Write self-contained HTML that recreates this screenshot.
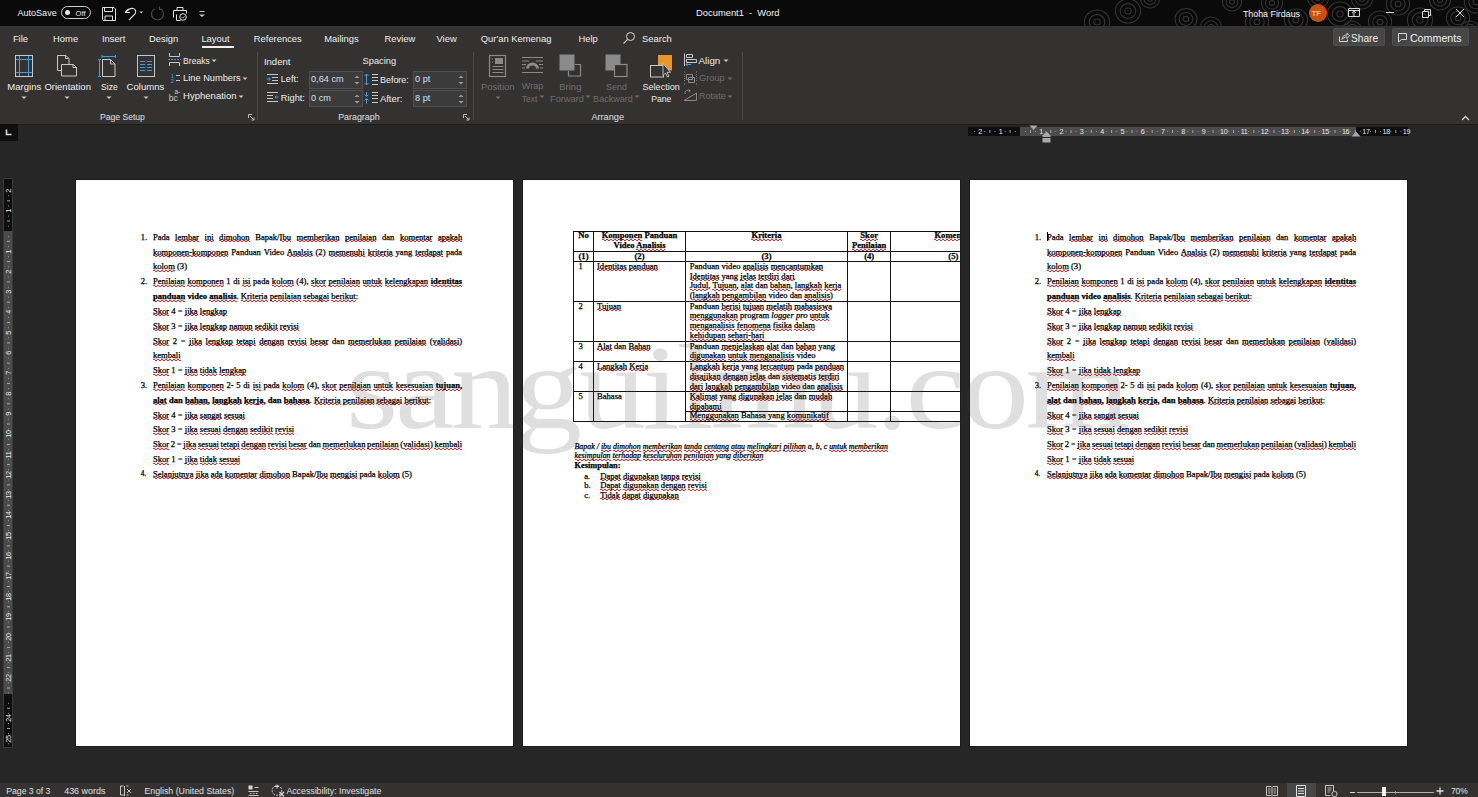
<!DOCTYPE html>
<html><head><meta charset="utf-8"><style>
html,body{margin:0;padding:0;width:1478px;height:797px;overflow:hidden;background:#262626;}
.r{position:absolute;}
.t{position:absolute;white-space:pre;}
.u{padding-bottom:0.5px;background-image:linear-gradient(90deg,#e42a2a 50%,transparent 50%),linear-gradient(90deg,transparent 50%,#e42a2a 50%);background-size:4px 1px,4px 1px;background-position:0 calc(100% - 1px),0 100%;background-repeat:repeat-x;}
b{font-weight:700;}
.pg{-webkit-text-stroke:0.25px #000;}
.eq{-webkit-text-stroke:0;}
</style></head><body>
<div class="r" style="left:0px;top:0px;width:1478px;height:26px;background:#0a0a0a"></div><svg class="r" style="left:1050px;top:0px;" width="428" height="26" viewBox="0 0 428 26"><ellipse cx="47" cy="22" rx="3.2" ry="3.0" fill="none" stroke="#333" stroke-width="1.1"/><ellipse cx="47" cy="22" rx="7.8" ry="7.4" fill="none" stroke="#333" stroke-width="1.1"/><ellipse cx="47" cy="22" rx="12.6" ry="12.0" fill="none" stroke="#333" stroke-width="1.1"/><ellipse cx="78" cy="11" rx="3.2" ry="3.0" fill="none" stroke="#333" stroke-width="1.1"/><ellipse cx="78" cy="11" rx="7.8" ry="7.4" fill="none" stroke="#333" stroke-width="1.1"/><ellipse cx="78" cy="11" rx="12.6" ry="12.0" fill="none" stroke="#333" stroke-width="1.1"/><ellipse cx="100" cy="-1" rx="2.4" ry="2.2" fill="none" stroke="#333" stroke-width="1.1"/><ellipse cx="100" cy="-1" rx="5.9" ry="5.6" fill="none" stroke="#333" stroke-width="1.1"/><ellipse cx="100" cy="-1" rx="9.5" ry="9.0" fill="none" stroke="#333" stroke-width="1.1"/><ellipse cx="136" cy="19" rx="2.8" ry="2.6" fill="none" stroke="#333" stroke-width="1.1"/><ellipse cx="136" cy="19" rx="6.8" ry="6.5" fill="none" stroke="#333" stroke-width="1.1"/><ellipse cx="136" cy="19" rx="11.0" ry="10.5" fill="none" stroke="#333" stroke-width="1.1"/><ellipse cx="161" cy="27" rx="2.6" ry="2.5" fill="none" stroke="#333" stroke-width="1.1"/><ellipse cx="161" cy="27" rx="6.5" ry="6.2" fill="none" stroke="#333" stroke-width="1.1"/><ellipse cx="161" cy="27" rx="10.5" ry="10.0" fill="none" stroke="#333" stroke-width="1.1"/><ellipse cx="207" cy="22" rx="2.9" ry="2.8" fill="none" stroke="#333" stroke-width="1.1"/><ellipse cx="207" cy="22" rx="7.2" ry="6.8" fill="none" stroke="#333" stroke-width="1.1"/><ellipse cx="207" cy="22" rx="11.6" ry="11.0" fill="none" stroke="#333" stroke-width="1.1"/><ellipse cx="222" cy="3" rx="2.6" ry="2.5" fill="none" stroke="#333" stroke-width="1.1"/><ellipse cx="222" cy="3" rx="6.5" ry="6.2" fill="none" stroke="#333" stroke-width="1.1"/><ellipse cx="222" cy="3" rx="10.5" ry="10.0" fill="none" stroke="#333" stroke-width="1.1"/><ellipse cx="246" cy="20" rx="2.9" ry="2.8" fill="none" stroke="#333" stroke-width="1.1"/><ellipse cx="246" cy="20" rx="7.2" ry="6.8" fill="none" stroke="#333" stroke-width="1.1"/><ellipse cx="246" cy="20" rx="11.6" ry="11.0" fill="none" stroke="#333" stroke-width="1.1"/><ellipse cx="268" cy="-2" rx="2.6" ry="2.5" fill="none" stroke="#333" stroke-width="1.1"/><ellipse cx="268" cy="-2" rx="6.5" ry="6.2" fill="none" stroke="#333" stroke-width="1.1"/><ellipse cx="268" cy="-2" rx="10.5" ry="10.0" fill="none" stroke="#333" stroke-width="1.1"/><ellipse cx="290" cy="14" rx="3.2" ry="3.0" fill="none" stroke="#333" stroke-width="1.1"/><ellipse cx="290" cy="14" rx="7.8" ry="7.4" fill="none" stroke="#333" stroke-width="1.1"/><ellipse cx="290" cy="14" rx="12.6" ry="12.0" fill="none" stroke="#333" stroke-width="1.1"/><ellipse cx="312" cy="-1" rx="2.6" ry="2.5" fill="none" stroke="#333" stroke-width="1.1"/><ellipse cx="312" cy="-1" rx="6.5" ry="6.2" fill="none" stroke="#333" stroke-width="1.1"/><ellipse cx="312" cy="-1" rx="10.5" ry="10.0" fill="none" stroke="#333" stroke-width="1.1"/><ellipse cx="330" cy="22" rx="2.9" ry="2.8" fill="none" stroke="#333" stroke-width="1.1"/><ellipse cx="330" cy="22" rx="7.2" ry="6.8" fill="none" stroke="#333" stroke-width="1.1"/><ellipse cx="330" cy="22" rx="11.6" ry="11.0" fill="none" stroke="#333" stroke-width="1.1"/><ellipse cx="348" cy="4" rx="2.9" ry="2.8" fill="none" stroke="#333" stroke-width="1.1"/><ellipse cx="348" cy="4" rx="7.2" ry="6.8" fill="none" stroke="#333" stroke-width="1.1"/><ellipse cx="348" cy="4" rx="11.6" ry="11.0" fill="none" stroke="#333" stroke-width="1.1"/><ellipse cx="370" cy="20" rx="3.2" ry="3.0" fill="none" stroke="#333" stroke-width="1.1"/><ellipse cx="370" cy="20" rx="7.8" ry="7.4" fill="none" stroke="#333" stroke-width="1.1"/><ellipse cx="370" cy="20" rx="12.6" ry="12.0" fill="none" stroke="#333" stroke-width="1.1"/><ellipse cx="390" cy="0" rx="2.6" ry="2.5" fill="none" stroke="#333" stroke-width="1.1"/><ellipse cx="390" cy="0" rx="6.5" ry="6.2" fill="none" stroke="#333" stroke-width="1.1"/><ellipse cx="390" cy="0" rx="10.5" ry="10.0" fill="none" stroke="#333" stroke-width="1.1"/><ellipse cx="408" cy="18" rx="2.9" ry="2.8" fill="none" stroke="#333" stroke-width="1.1"/><ellipse cx="408" cy="18" rx="7.2" ry="6.8" fill="none" stroke="#333" stroke-width="1.1"/><ellipse cx="408" cy="18" rx="11.6" ry="11.0" fill="none" stroke="#333" stroke-width="1.1"/><ellipse cx="426" cy="2" rx="2.9" ry="2.8" fill="none" stroke="#333" stroke-width="1.1"/><ellipse cx="426" cy="2" rx="7.2" ry="6.8" fill="none" stroke="#333" stroke-width="1.1"/><ellipse cx="426" cy="2" rx="11.6" ry="11.0" fill="none" stroke="#333" stroke-width="1.1"/><ellipse cx="182" cy="2" rx="2.4" ry="2.2" fill="none" stroke="#333" stroke-width="1.1"/><ellipse cx="182" cy="2" rx="5.9" ry="5.6" fill="none" stroke="#333" stroke-width="1.1"/><ellipse cx="182" cy="2" rx="9.5" ry="9.0" fill="none" stroke="#333" stroke-width="1.1"/><ellipse cx="302" cy="30" rx="2.4" ry="2.2" fill="none" stroke="#333" stroke-width="1.1"/><ellipse cx="302" cy="30" rx="5.9" ry="5.6" fill="none" stroke="#333" stroke-width="1.1"/><ellipse cx="302" cy="30" rx="9.5" ry="9.0" fill="none" stroke="#333" stroke-width="1.1"/><ellipse cx="420" cy="30" rx="2.4" ry="2.2" fill="none" stroke="#333" stroke-width="1.1"/><ellipse cx="420" cy="30" rx="5.9" ry="5.6" fill="none" stroke="#333" stroke-width="1.1"/><ellipse cx="420" cy="30" rx="9.5" ry="9.0" fill="none" stroke="#333" stroke-width="1.1"/></svg><div class="r" style="left:61px;top:6px;width:28px;height:11px;border:1px solid #d0d0d0;border-radius:7px"></div><div class="r" style="left:65px;top:10px;width:5px;height:5px;background:#e8e8e8;border-radius:50%"></div><div class="t" style="left:75.50px;top:9.77px;font-size:7.6px;line-height:7.6px;color:#e0e0e0;font-family:'Liberation Sans', sans-serif;">Off</div><svg class="r" style="left:101px;top:7px;" width="15" height="14" viewBox="0 0 15 14"><path d="M1.5 0.5h11.5l1.5 1.5v11.5h-12l-1-1z" fill="none" stroke="#e0e0e0" stroke-width="1"/><path d="M3.5 0.5v4h8v-4 M4 13.5v-4.5h7.5v4.5" fill="none" stroke="#e0e0e0" stroke-width="1"/></svg><svg class="r" style="left:124px;top:6px;" width="22" height="15" viewBox="0 0 22 15"><path d="M1 6.5h5 M1 6.5l3.5-3.5" fill="none" stroke="#e0e0e0" stroke-width="1.1"/><path d="M1.5 6.5C4 3.5 6.5 2 9 2.5c2.5 0.5 3.5 3 2 5.5L5 14" fill="none" stroke="#e0e0e0" stroke-width="1.1"/><path d="M15.5 5.5h3.5l-1.75 2z" fill="#d0d0d0"/></svg><svg class="r" style="left:150px;top:6px;" width="15" height="15" viewBox="0 0 15 15"><path d="M4.5 2.8A6 6 0 1 0 10.5 2.8 M9.5 0.5v3h3" fill="none" stroke="#4a4a4a" stroke-width="1.1"/></svg><svg class="r" style="left:173px;top:7px;" width="15" height="14" viewBox="0 0 15 14"><path d="M4 3.5v-3h6v3 M0.5 10.5v-7h13v3 M3.5 7.5v6h4" fill="none" stroke="#e0e0e0" stroke-width="1"/><circle cx="10" cy="10" r="3.3" fill="#0a0a0a" stroke="#e0e0e0" stroke-width="1"/><path d="M8.5 10l1.2 1.2 2-2" fill="none" stroke="#e0e0e0" stroke-width="0.8"/></svg><svg class="r" style="left:198px;top:10px;" width="8" height="8" viewBox="0 0 8 8"><path d="M1.5 1.5h5" stroke="#c8c8c8" stroke-width="1"/><path d="M1 4.5h6l-3 2.5z" fill="#c8c8c8"/></svg><div class="r" style="left:1309px;top:4px;width:18px;height:18px;border-radius:50%;background:#ca5010"></div><div class="t" style="left:1311.50px;top:9.60px;font-size:7.8px;line-height:7.8px;color:#fbe6d8;font-family:'Liberation Sans', sans-serif;">TF</div><svg class="r" style="left:1347px;top:7px;" width="14" height="11" viewBox="0 0 14 11"><path d="M1.5 1.5h11v8h-11z M1.5 3.5h11 M7 3.5v6" fill="none" stroke="#d8d8d8" stroke-width="1"/><path d="M5 6l2-2 2 2" fill="none" stroke="#d8d8d8" stroke-width="0.8"/></svg><div class="r" style="left:1386px;top:12px;width:8px;height:1px;background:#d8d8d8"></div><svg class="r" style="left:1420px;top:8px;" width="11" height="10" viewBox="0 0 11 10"><path d="M2.5 3.5h6v6h-6z M4.5 3.5v-2h6v6h-2" fill="none" stroke="#d8d8d8" stroke-width="1"/></svg><svg class="r" style="left:1455px;top:8px;" width="10" height="10" viewBox="0 0 10 10"><path d="M1 1l8 8M9 1l-8 8" stroke="#d8d8d8" stroke-width="1"/></svg><div class="r" style="left:0px;top:26px;width:1478px;height:98px;background:#333231"></div><div class="r" style="left:202px;top:46px;width:32px;height:2px;background:#f0f0f0"></div><svg class="r" style="left:622px;top:31px;" width="14" height="14" viewBox="0 0 14 14"><circle cx="8.5" cy="5.5" r="4" fill="none" stroke="#d8d8d8" stroke-width="1"/><path d="M5.6 8.4L1.5 12.5" stroke="#d8d8d8" stroke-width="1.1"/></svg><div class="r" style="left:1333px;top:28px;width:52px;height:18px;background:#464646;border:1px solid #4e4e4e;border-radius:2px;box-sizing:border-box"></div><svg class="r" style="left:1338px;top:31px;" width="12" height="12" viewBox="0 0 12 12"><path d="M1.5 5.5v5h8v-2" fill="none" stroke="#d8d8d8" stroke-width="1"/><path d="M4 8.5c0-3 2-4.5 5-4.5V2l2.5 2.8L9 7.5V6C6.5 6 5 7 4 8.5z" fill="none" stroke="#d8d8d8" stroke-width="0.9"/></svg><div class="r" style="left:1392px;top:28px;width:77px;height:18px;background:#464646;border:1px solid #4e4e4e;border-radius:2px;box-sizing:border-box"></div><svg class="r" style="left:1397px;top:32px;" width="11" height="11" viewBox="0 0 11 11"><path d="M1.5 1.5h8v6h-5l-3 2.5z" fill="none" stroke="#d8d8d8" stroke-width="1"/></svg><svg class="r" style="left:14px;top:54px;" width="21" height="24" viewBox="0 0 21 24"><rect x="1.5" y="1.5" width="17" height="21" fill="none" stroke="#c8c8c8" stroke-width="1"/><path d="M5.5 2v20 M14.5 2v20 M2 5.5h16 M2 18.5h16" stroke="#3c9ee8" stroke-width="1"/></svg><svg class="r" style="left:21px;top:96px;" width="7" height="4" viewBox="0 0 7 4"><path d="M0.5 0.5h5l-2.5 2.5z" fill="#c8c8c8"/></svg><svg class="r" style="left:56px;top:54px;" width="24" height="24" viewBox="0 0 24 24"><path d="M1.5 1.5h8.5l3 3v5.5 M1.5 1.5v15h4" fill="none" stroke="#c8c8c8" stroke-width="1"/><path d="M9.5 1.5v3h3" fill="none" stroke="#c8c8c8" stroke-width="1"/><path d="M5.5 10.5h12l3 3v8.5h-15z" fill="none" stroke="#c8c8c8" stroke-width="1"/><path d="M17 10.5v3h3.5" fill="none" stroke="#c8c8c8" stroke-width="1"/></svg><svg class="r" style="left:64px;top:96px;" width="7" height="4" viewBox="0 0 7 4"><path d="M0.5 0.5h5l-2.5 2.5z" fill="#c8c8c8"/></svg><svg class="r" style="left:98px;top:54px;" width="20" height="24" viewBox="0 0 20 24"><path d="M4 2.5h13.5 M4 1v3 M17.5 1v3 M1.5 5.5v17 M0 5.5h3 M0 22.5h3" stroke="#3c9ee8" stroke-width="1" fill="none"/><path d="M4.5 5.5h8l4.5 4.5v12.5h-12.5z M12.5 5.5v4.5h4.5" fill="none" stroke="#c8c8c8" stroke-width="1"/></svg><svg class="r" style="left:106px;top:96px;" width="7" height="4" viewBox="0 0 7 4"><path d="M0.5 0.5h5l-2.5 2.5z" fill="#c8c8c8"/></svg><svg class="r" style="left:136px;top:54px;" width="20" height="24" viewBox="0 0 20 24"><rect x="1.5" y="1.5" width="17" height="21" fill="none" stroke="#c8c8c8" stroke-width="1"/><path d="M4 7.5h5 M11 7.5h5 M4 10.5h5 M11 10.5h5 M4 13.5h5 M11 13.5h5 M4 16.5h5 M11 16.5h5" stroke="#3c9ee8" stroke-width="1"/></svg><svg class="r" style="left:143px;top:96px;" width="7" height="4" viewBox="0 0 7 4"><path d="M0.5 0.5h5l-2.5 2.5z" fill="#c8c8c8"/></svg><svg class="r" style="left:168px;top:53px;" width="13" height="13" viewBox="0 0 13 13"><path d="M1.5 0v3.5h10V0 M1.5 13v-3.5h10V13" fill="none" stroke="#c8c8c8" stroke-width="1"/><path d="M0 6.5h13" stroke="#3c9ee8" stroke-width="1" stroke-dasharray="2 1"/></svg><svg class="r" style="left:211px;top:59px;" width="6" height="4" viewBox="0 0 6 4"><path d="M0.5 0.5h5l-2.5 2.5z" fill="#c8c8c8"/></svg><div class="t" style="left:170.80px;top:72.92px;font-size:6px;line-height:6px;color:#3c9ee8;font-family:'Liberation Sans', sans-serif;">1</div><div class="t" style="left:170.80px;top:78.42px;font-size:6px;line-height:6px;color:#3c9ee8;font-family:'Liberation Sans', sans-serif;">2</div><svg class="r" style="left:175px;top:74px;" width="6" height="8" viewBox="0 0 6 8"><path d="M1 1.5h4 M1 6.5h4" stroke="#c8c8c8" stroke-width="1"/></svg><svg class="r" style="left:242px;top:77px;" width="6" height="4" viewBox="0 0 6 4"><path d="M0.5 0.5h5l-2.5 2.5z" fill="#c8c8c8"/></svg><div class="t" style="left:174.50px;top:89.00px;font-size:6.5px;line-height:6.5px;color:#c8c8c8;font-family:'Liberation Sans', sans-serif;">a-</div><div class="t" style="left:168.80px;top:94.00px;font-size:8.5px;line-height:8.5px;color:#c8c8c8;font-family:'Liberation Sans', sans-serif;">bc</div><svg class="r" style="left:238px;top:95px;" width="6" height="4" viewBox="0 0 6 4"><path d="M0.5 0.5h5l-2.5 2.5z" fill="#c8c8c8"/></svg><svg class="r" style="left:248px;top:114px;" width="7" height="7" viewBox="0 0 7 7"><path d="M0.5 4V0.5H4 M2 2l4 4 M3.5 6h2.5V3.5" fill="none" stroke="#bbb" stroke-width="1"/></svg><div class="r" style="left:257px;top:52px;width:1px;height:68px;background:#4a4a4a"></div><svg class="r" style="left:266px;top:73px;" width="13" height="12" viewBox="0 0 13 12"><path d="M1 1.5h11 M6 4.5h6 M6 7.5h6 M1 10.5h11" stroke="#c8c8c8" stroke-width="1"/><path d="M0.5 6h3.5 M3 4.5l1.5 1.5L3 7.5" fill="none" stroke="#3c9ee8" stroke-width="1"/></svg><svg class="r" style="left:266px;top:91px;" width="13" height="12" viewBox="0 0 13 12"><path d="M1 1.5h11 M1 4.5h6 M1 7.5h6 M1 10.5h11" stroke="#c8c8c8" stroke-width="1"/><path d="M12.5 6H9 M10.5 4.5L9 6l1.5 1.5" fill="none" stroke="#3c9ee8" stroke-width="1"/></svg><div class="r" style="left:309px;top:71px;width:54px;height:17.5px;background:#3b3b3b;border:1px solid #4f4f4f;box-sizing:border-box"></div><div class="t" style="left:311.00px;top:75.31px;font-size:9.2px;line-height:9.2px;color:#cfe0f0;font-family:'Liberation Sans', sans-serif;">0,64 cm</div><svg class="r" style="left:354px;top:74px;" width="6" height="12" viewBox="0 0 6 12"><path d="M0.5 4l2.5-2.5 2.5 2.5z M0.5 8l2.5 2.5 2.5-2.5z" fill="#9a9a9a"/></svg><div class="r" style="left:309px;top:89.5px;width:54px;height:17.5px;background:#3b3b3b;border:1px solid #4f4f4f;box-sizing:border-box"></div><div class="t" style="left:311.00px;top:93.81px;font-size:9.2px;line-height:9.2px;color:#cfe0f0;font-family:'Liberation Sans', sans-serif;">0 cm</div><svg class="r" style="left:354px;top:92.5px;" width="6" height="12" viewBox="0 0 6 12"><path d="M0.5 4l2.5-2.5 2.5 2.5z M0.5 8l2.5 2.5 2.5-2.5z" fill="#9a9a9a"/></svg><div class="r" style="left:413px;top:71px;width:54px;height:17.5px;background:#3b3b3b;border:1px solid #4f4f4f;box-sizing:border-box"></div><div class="t" style="left:415.00px;top:75.31px;font-size:9.2px;line-height:9.2px;color:#cfe0f0;font-family:'Liberation Sans', sans-serif;">0 pt</div><svg class="r" style="left:458px;top:74px;" width="6" height="12" viewBox="0 0 6 12"><path d="M0.5 4l2.5-2.5 2.5 2.5z M0.5 8l2.5 2.5 2.5-2.5z" fill="#9a9a9a"/></svg><div class="r" style="left:413px;top:89.5px;width:54px;height:17.5px;background:#3b3b3b;border:1px solid #4f4f4f;box-sizing:border-box"></div><div class="t" style="left:415.00px;top:93.81px;font-size:9.2px;line-height:9.2px;color:#cfe0f0;font-family:'Liberation Sans', sans-serif;">8 pt</div><svg class="r" style="left:458px;top:92.5px;" width="6" height="12" viewBox="0 0 6 12"><path d="M0.5 4l2.5-2.5 2.5 2.5z M0.5 8l2.5 2.5 2.5-2.5z" fill="#9a9a9a"/></svg><svg class="r" style="left:364px;top:73px;" width="15" height="13" viewBox="0 0 15 13"><path d="M2.5 1v11 M0.5 3L2.5 1l2 2 M0.5 10l2 2 2-2" fill="none" stroke="#3c9ee8" stroke-width="1"/><path d="M8 1.5h6 M8 4.5h6 M8 7.5h6 M8 11.5h6" stroke="#c8c8c8" stroke-width="1"/></svg><svg class="r" style="left:364px;top:91px;" width="15" height="13" viewBox="0 0 15 13"><path d="M2.5 1v4.5 M0.5 3.5l2 2 2-2 M2.5 7.5v5 M0.5 9.5l2-2 2 2" fill="none" stroke="#3c9ee8" stroke-width="1"/><path d="M8 1.5h6 M8 4.5h6 M8 7.5h6 M8 11.5h6" stroke="#c8c8c8" stroke-width="1"/></svg><svg class="r" style="left:463px;top:114px;" width="7" height="7" viewBox="0 0 7 7"><path d="M0.5 4V0.5H4 M2 2l4 4 M3.5 6h2.5V3.5" fill="none" stroke="#bbb" stroke-width="1"/></svg><div class="r" style="left:473px;top:52px;width:1px;height:68px;background:#4a4a4a"></div><svg class="r" style="left:488px;top:54px;" width="20" height="24" viewBox="0 0 20 24"><rect x="1.5" y="1.5" width="16" height="21" fill="none" stroke="#8a8a8a" stroke-width="1.2"/><rect x="7" y="4" width="8" height="6" fill="#8a8a8a"/><path d="M4 5h1 M4 8h1 M4.5 12.5h11 M4.5 15.5h11 M4.5 18.5h11" stroke="#8a8a8a" stroke-width="1.2"/></svg><svg class="r" style="left:495px;top:96px;" width="6" height="4" viewBox="0 0 6 4"><path d="M0.5 0.5h5l-2.5 2.5z" fill="#6e6e6e"/></svg><svg class="r" style="left:521px;top:56px;" width="23" height="19" viewBox="0 0 23 19"><path d="M1 1.5h21 M1 5h7 M15 5h7 M1 8.5h4 M18 8.5h4 M1 12h3 M19 12h3 M1 16.5h21" stroke="#8a8a8a" stroke-width="1.2"/><path d="M6.5 12.5a5 4.5 0 0 1 10 0" fill="none" stroke="#8a8a8a" stroke-width="3"/></svg><svg class="r" style="left:539px;top:95px;" width="6" height="4" viewBox="0 0 6 4"><path d="M0.5 0.5h5l-2.5 2.5z" fill="#6e6e6e"/></svg><svg class="r" style="left:559px;top:54px;" width="24" height="24" viewBox="0 0 24 24"><rect x="0.5" y="0.5" width="15" height="16" fill="#8a8a8a"/><path d="M16 10.5h5.5v11.5h-12v-5" fill="none" stroke="#8a8a8a" stroke-width="1.2"/></svg><svg class="r" style="left:585px;top:95px;" width="6" height="4" viewBox="0 0 6 4"><path d="M0.5 0.5h5l-2.5 2.5z" fill="#6e6e6e"/></svg><svg class="r" style="left:605px;top:54px;" width="24" height="24" viewBox="0 0 24 24"><rect x="0.5" y="0.5" width="15" height="16" fill="#8a8a8a"/><rect x="9.5" y="10.5" width="12.5" height="12" fill="#333231" stroke="#8a8a8a" stroke-width="1.2"/></svg><svg class="r" style="left:634px;top:95px;" width="6" height="4" viewBox="0 0 6 4"><path d="M0.5 0.5h5l-2.5 2.5z" fill="#6e6e6e"/></svg><svg class="r" style="left:649px;top:54px;" width="26" height="26" viewBox="0 0 26 26"><rect x="9" y="1" width="14" height="15.5" fill="#e8952a"/><rect x="1.5" y="11.5" width="13" height="11.5" fill="#333231" stroke="#c8c8c8" stroke-width="1"/><path d="M14 9.5v12l2.5-2.5 2 4 1.5-.7-2-4h3.5z" fill="#333231" stroke="#c8c8c8" stroke-width="0.9"/></svg><svg class="r" style="left:683px;top:53px;" width="15" height="14" viewBox="0 0 15 14"><path d="M1.5 0.5v12.5" stroke="#c8c8c8" stroke-width="1"/><path d="M3.5 1.5h6v3h-6z M3.5 6.5h10v3h-10z" fill="none" stroke="#c8c8c8" stroke-width="1"/><path d="M3 11.5h5 M4.5 10l-1.5 1.5 1.5 1.5" fill="none" stroke="#3c9ee8" stroke-width="1"/></svg><svg class="r" style="left:723px;top:59px;" width="6" height="4" viewBox="0 0 6 4"><path d="M0.5 0.5h5l-2.5 2.5z" fill="#c8c8c8"/></svg><svg class="r" style="left:683px;top:71px;" width="15" height="14" viewBox="0 0 15 14"><path d="M1 1h1 M13 1h1 M1 13h1 M13 13h1" stroke="#8a8a8a" stroke-width="1.2"/><path d="M3.5 3.5h6v5h-6z M5.5 6.5h6v5h-6z" fill="none" stroke="#8a8a8a" stroke-width="1"/><path d="M1.5 3v8 M13.5 3v8" stroke="#8a8a8a" stroke-width="0.8" stroke-dasharray="1 1"/></svg><svg class="r" style="left:727px;top:77px;" width="6" height="4" viewBox="0 0 6 4"><path d="M0.5 0.5h5l-2.5 2.5z" fill="#6e6e6e"/></svg><svg class="r" style="left:683px;top:89px;" width="15" height="13" viewBox="0 0 15 13"><path d="M1 11.5h12.5V4z" fill="none" stroke="#8a8a8a" stroke-width="1"/><path d="M2 5a3 3 0 0 1 5-3 M6 0.5l1.3 1.5-1.8.8" fill="none" stroke="#8a8a8a" stroke-width="0.9"/></svg><svg class="r" style="left:727px;top:95px;" width="6" height="4" viewBox="0 0 6 4"><path d="M0.5 0.5h5l-2.5 2.5z" fill="#6e6e6e"/></svg><div class="r" style="left:742px;top:52px;width:1px;height:68px;background:#4a4a4a"></div><svg class="r" style="left:1461px;top:115px;" width="9" height="6" viewBox="0 0 9 6"><path d="M1 5l3.5-3.5L8 5" fill="none" stroke="#d8d8d8" stroke-width="1.3"/></svg><div class="r" style="left:0px;top:124px;width:1478px;height:659px;background:#262626"></div><div class="r" style="left:0px;top:124px;width:1478px;height:1px;background:#1d1d1d"></div><div class="r" style="left:0px;top:124px;width:18px;height:17px;background:#0f0f0f"></div><svg class="r" style="left:5px;top:129px;" width="8" height="7" viewBox="0 0 8 7"><path d="M1.5 0.5v5h5" fill="none" stroke="#d8d8d8" stroke-width="1.6"/></svg><div class="r" style="left:968px;top:127px;width:52px;height:9px;background:#0e0e0e"></div><div class="r" style="left:1020px;top:127px;width:336px;height:9px;background:#4b4b4b"></div><div class="r" style="left:1356px;top:127px;width:52px;height:9px;background:#0e0e0e"></div><svg class="r" style="left:968px;top:127px;" width="440" height="9" viewBox="0 0 440 9"><rect x="6.2" y="4" width="0.9" height="1" fill="#9a9a9a"/><rect x="16.4" y="4" width="0.9" height="1" fill="#9a9a9a"/><path d="M21.8 3v3" stroke="#bdbdbd" stroke-width="0.8"/><rect x="26.5" y="4" width="0.9" height="1" fill="#9a9a9a"/><rect x="36.7" y="4" width="0.9" height="1" fill="#9a9a9a"/><path d="M42.1 3v3" stroke="#bdbdbd" stroke-width="0.8"/><rect x="46.8" y="4" width="0.9" height="1" fill="#9a9a9a"/><rect x="57.0" y="4" width="0.9" height="1" fill="#9a9a9a"/><path d="M62.5 3v3" stroke="#bdbdbd" stroke-width="0.8"/><rect x="67.1" y="4" width="0.9" height="1" fill="#9a9a9a"/><rect x="77.3" y="4" width="0.9" height="1" fill="#9a9a9a"/><path d="M82.8 3v3" stroke="#bdbdbd" stroke-width="0.8"/><rect x="87.4" y="4" width="0.9" height="1" fill="#9a9a9a"/><rect x="97.6" y="4" width="0.9" height="1" fill="#9a9a9a"/><path d="M103.0 3v3" stroke="#bdbdbd" stroke-width="0.8"/><rect x="107.7" y="4" width="0.9" height="1" fill="#9a9a9a"/><rect x="117.9" y="4" width="0.9" height="1" fill="#9a9a9a"/><path d="M123.3 3v3" stroke="#bdbdbd" stroke-width="0.8"/><rect x="128.0" y="4" width="0.9" height="1" fill="#9a9a9a"/><rect x="138.2" y="4" width="0.9" height="1" fill="#9a9a9a"/><path d="M143.6 3v3" stroke="#bdbdbd" stroke-width="0.8"/><rect x="148.3" y="4" width="0.9" height="1" fill="#9a9a9a"/><rect x="158.5" y="4" width="0.9" height="1" fill="#9a9a9a"/><path d="M164.0 3v3" stroke="#bdbdbd" stroke-width="0.8"/><rect x="168.6" y="4" width="0.9" height="1" fill="#9a9a9a"/><rect x="178.8" y="4" width="0.9" height="1" fill="#9a9a9a"/><path d="M184.2 3v3" stroke="#bdbdbd" stroke-width="0.8"/><rect x="188.9" y="4" width="0.9" height="1" fill="#9a9a9a"/><rect x="199.1" y="4" width="0.9" height="1" fill="#9a9a9a"/><path d="M204.5 3v3" stroke="#bdbdbd" stroke-width="0.8"/><rect x="209.2" y="4" width="0.9" height="1" fill="#9a9a9a"/><rect x="219.4" y="4" width="0.9" height="1" fill="#9a9a9a"/><path d="M224.8 3v3" stroke="#bdbdbd" stroke-width="0.8"/><rect x="229.5" y="4" width="0.9" height="1" fill="#9a9a9a"/><rect x="239.7" y="4" width="0.9" height="1" fill="#9a9a9a"/><path d="M245.1 3v3" stroke="#bdbdbd" stroke-width="0.8"/><rect x="249.8" y="4" width="0.9" height="1" fill="#9a9a9a"/><rect x="260.0" y="4" width="0.9" height="1" fill="#9a9a9a"/><path d="M265.5 3v3" stroke="#bdbdbd" stroke-width="0.8"/><rect x="270.1" y="4" width="0.9" height="1" fill="#9a9a9a"/><rect x="280.3" y="4" width="0.9" height="1" fill="#9a9a9a"/><path d="M285.8 3v3" stroke="#bdbdbd" stroke-width="0.8"/><rect x="290.4" y="4" width="0.9" height="1" fill="#9a9a9a"/><rect x="300.6" y="4" width="0.9" height="1" fill="#9a9a9a"/><path d="M306.0 3v3" stroke="#bdbdbd" stroke-width="0.8"/><rect x="310.7" y="4" width="0.9" height="1" fill="#9a9a9a"/><rect x="320.9" y="4" width="0.9" height="1" fill="#9a9a9a"/><path d="M326.3 3v3" stroke="#bdbdbd" stroke-width="0.8"/><rect x="331.0" y="4" width="0.9" height="1" fill="#9a9a9a"/><rect x="341.2" y="4" width="0.9" height="1" fill="#9a9a9a"/><path d="M346.7 3v3" stroke="#bdbdbd" stroke-width="0.8"/><rect x="351.3" y="4" width="0.9" height="1" fill="#9a9a9a"/><rect x="361.5" y="4" width="0.9" height="1" fill="#9a9a9a"/><path d="M367.0 3v3" stroke="#bdbdbd" stroke-width="0.8"/><rect x="371.6" y="4" width="0.9" height="1" fill="#9a9a9a"/><rect x="381.8" y="4" width="0.9" height="1" fill="#9a9a9a"/><path d="M387.2 3v3" stroke="#bdbdbd" stroke-width="0.8"/><rect x="391.9" y="4" width="0.9" height="1" fill="#9a9a9a"/><rect x="402.1" y="4" width="0.9" height="1" fill="#9a9a9a"/><path d="M407.5 3v3" stroke="#bdbdbd" stroke-width="0.8"/><rect x="412.2" y="4" width="0.9" height="1" fill="#9a9a9a"/><rect x="422.4" y="4" width="0.9" height="1" fill="#9a9a9a"/><path d="M427.8 3v3" stroke="#bdbdbd" stroke-width="0.8"/><rect x="432.5" y="4" width="0.9" height="1" fill="#9a9a9a"/></svg><div class="t" style="left:977.70px;top:128.21px;font-size:7.2px;line-height:7.2px;color:#e8e8e8;font-family:'Liberation Sans', sans-serif;width:5.00px;text-align:center;letter-spacing:-0.3px">2</div><div class="t" style="left:998.00px;top:128.21px;font-size:7.2px;line-height:7.2px;color:#e8e8e8;font-family:'Liberation Sans', sans-serif;width:5.00px;text-align:center;letter-spacing:-0.3px">1</div><div class="t" style="left:1038.60px;top:128.21px;font-size:7.2px;line-height:7.2px;color:#e8e8e8;font-family:'Liberation Sans', sans-serif;width:5.00px;text-align:center;letter-spacing:-0.3px">1</div><div class="t" style="left:1058.90px;top:128.21px;font-size:7.2px;line-height:7.2px;color:#e8e8e8;font-family:'Liberation Sans', sans-serif;width:5.00px;text-align:center;letter-spacing:-0.3px">2</div><div class="t" style="left:1079.20px;top:128.21px;font-size:7.2px;line-height:7.2px;color:#e8e8e8;font-family:'Liberation Sans', sans-serif;width:5.00px;text-align:center;letter-spacing:-0.3px">3</div><div class="t" style="left:1099.50px;top:128.21px;font-size:7.2px;line-height:7.2px;color:#e8e8e8;font-family:'Liberation Sans', sans-serif;width:5.00px;text-align:center;letter-spacing:-0.3px">4</div><div class="t" style="left:1119.80px;top:128.21px;font-size:7.2px;line-height:7.2px;color:#e8e8e8;font-family:'Liberation Sans', sans-serif;width:5.00px;text-align:center;letter-spacing:-0.3px">5</div><div class="t" style="left:1140.10px;top:128.21px;font-size:7.2px;line-height:7.2px;color:#e8e8e8;font-family:'Liberation Sans', sans-serif;width:5.00px;text-align:center;letter-spacing:-0.3px">6</div><div class="t" style="left:1160.40px;top:128.21px;font-size:7.2px;line-height:7.2px;color:#e8e8e8;font-family:'Liberation Sans', sans-serif;width:5.00px;text-align:center;letter-spacing:-0.3px">7</div><div class="t" style="left:1180.70px;top:128.21px;font-size:7.2px;line-height:7.2px;color:#e8e8e8;font-family:'Liberation Sans', sans-serif;width:5.00px;text-align:center;letter-spacing:-0.3px">8</div><div class="t" style="left:1201.00px;top:128.21px;font-size:7.2px;line-height:7.2px;color:#e8e8e8;font-family:'Liberation Sans', sans-serif;width:5.00px;text-align:center;letter-spacing:-0.3px">9</div><div class="t" style="left:1219.30px;top:128.21px;font-size:7.2px;line-height:7.2px;color:#e8e8e8;font-family:'Liberation Sans', sans-serif;width:9.00px;text-align:center;letter-spacing:-0.3px">10</div><div class="t" style="left:1239.60px;top:128.21px;font-size:7.2px;line-height:7.2px;color:#e8e8e8;font-family:'Liberation Sans', sans-serif;width:9.00px;text-align:center;letter-spacing:-0.3px">11</div><div class="t" style="left:1259.90px;top:128.21px;font-size:7.2px;line-height:7.2px;color:#e8e8e8;font-family:'Liberation Sans', sans-serif;width:9.00px;text-align:center;letter-spacing:-0.3px">12</div><div class="t" style="left:1280.20px;top:128.21px;font-size:7.2px;line-height:7.2px;color:#e8e8e8;font-family:'Liberation Sans', sans-serif;width:9.00px;text-align:center;letter-spacing:-0.3px">13</div><div class="t" style="left:1300.50px;top:128.21px;font-size:7.2px;line-height:7.2px;color:#e8e8e8;font-family:'Liberation Sans', sans-serif;width:9.00px;text-align:center;letter-spacing:-0.3px">14</div><div class="t" style="left:1320.80px;top:128.21px;font-size:7.2px;line-height:7.2px;color:#e8e8e8;font-family:'Liberation Sans', sans-serif;width:9.00px;text-align:center;letter-spacing:-0.3px">15</div><div class="t" style="left:1341.10px;top:128.21px;font-size:7.2px;line-height:7.2px;color:#e8e8e8;font-family:'Liberation Sans', sans-serif;width:9.00px;text-align:center;letter-spacing:-0.3px">16</div><div class="t" style="left:1361.40px;top:128.21px;font-size:7.2px;line-height:7.2px;color:#e8e8e8;font-family:'Liberation Sans', sans-serif;width:9.00px;text-align:center;letter-spacing:-0.3px">17</div><div class="t" style="left:1381.70px;top:128.21px;font-size:7.2px;line-height:7.2px;color:#e8e8e8;font-family:'Liberation Sans', sans-serif;width:9.00px;text-align:center;letter-spacing:-0.3px">18</div><div class="t" style="left:1402.00px;top:128.21px;font-size:7.2px;line-height:7.2px;color:#e8e8e8;font-family:'Liberation Sans', sans-serif;width:9.00px;text-align:center;letter-spacing:-0.3px">19</div><svg class="r" style="left:1029px;top:125px;" width="9" height="6" viewBox="0 0 9 6"><path d="M0.5 0.5h8l-4 4.5z" fill="#a8a8a8"/></svg><svg class="r" style="left:1042px;top:131px;" width="9" height="12" viewBox="0 0 9 12"><path d="M4.5 0.5l4 4v1.5h-8v-1.5z" fill="#a8a8a8"/><rect x="0.5" y="7" width="8" height="4.5" fill="#a8a8a8"/></svg><svg class="r" style="left:1351px;top:131px;" width="10" height="6" viewBox="0 0 10 6"><path d="M5 0.5l4.5 5h-9z" fill="#a8a8a8"/></svg><div class="r" style="left:3px;top:178px;width:10px;height:570px;background:#3a3a3a"></div><div class="r" style="left:4px;top:179px;width:8px;height:52px;background:#0e0e0e"></div><div class="r" style="left:4px;top:231px;width:8px;height:463px;background:#4b4b4b"></div><div class="r" style="left:4px;top:694px;width:8px;height:53px;background:#0e0e0e"></div><svg class="r" style="left:4px;top:178px;" width="8" height="570" viewBox="0 0 8 570"><rect x="4" y="17.3" width="1" height="0.9" fill="#9a9a9a"/><path d="M3 22.8h3" stroke="#bdbdbd" stroke-width="0.8"/><rect x="4" y="27.4" width="1" height="0.9" fill="#9a9a9a"/><rect x="4" y="37.6" width="1" height="0.9" fill="#9a9a9a"/><path d="M3 43.0h3" stroke="#bdbdbd" stroke-width="0.8"/><rect x="4" y="47.7" width="1" height="0.9" fill="#9a9a9a"/><rect x="4" y="57.9" width="1" height="0.9" fill="#9a9a9a"/><path d="M3 63.3h3" stroke="#bdbdbd" stroke-width="0.8"/><rect x="4" y="68.0" width="1" height="0.9" fill="#9a9a9a"/><rect x="4" y="78.2" width="1" height="0.9" fill="#9a9a9a"/><path d="M3 83.6h3" stroke="#bdbdbd" stroke-width="0.8"/><rect x="4" y="88.3" width="1" height="0.9" fill="#9a9a9a"/><rect x="4" y="98.5" width="1" height="0.9" fill="#9a9a9a"/><path d="M3 103.9h3" stroke="#bdbdbd" stroke-width="0.8"/><rect x="4" y="108.6" width="1" height="0.9" fill="#9a9a9a"/><rect x="4" y="118.8" width="1" height="0.9" fill="#9a9a9a"/><path d="M3 124.2h3" stroke="#bdbdbd" stroke-width="0.8"/><rect x="4" y="128.9" width="1" height="0.9" fill="#9a9a9a"/><rect x="4" y="139.1" width="1" height="0.9" fill="#9a9a9a"/><path d="M3 144.6h3" stroke="#bdbdbd" stroke-width="0.8"/><rect x="4" y="149.2" width="1" height="0.9" fill="#9a9a9a"/><rect x="4" y="159.4" width="1" height="0.9" fill="#9a9a9a"/><path d="M3 164.9h3" stroke="#bdbdbd" stroke-width="0.8"/><rect x="4" y="169.5" width="1" height="0.9" fill="#9a9a9a"/><rect x="4" y="179.7" width="1" height="0.9" fill="#9a9a9a"/><path d="M3 185.1h3" stroke="#bdbdbd" stroke-width="0.8"/><rect x="4" y="189.8" width="1" height="0.9" fill="#9a9a9a"/><rect x="4" y="200.0" width="1" height="0.9" fill="#9a9a9a"/><path d="M3 205.4h3" stroke="#bdbdbd" stroke-width="0.8"/><rect x="4" y="210.1" width="1" height="0.9" fill="#9a9a9a"/><rect x="4" y="220.3" width="1" height="0.9" fill="#9a9a9a"/><path d="M3 225.8h3" stroke="#bdbdbd" stroke-width="0.8"/><rect x="4" y="230.4" width="1" height="0.9" fill="#9a9a9a"/><rect x="4" y="240.6" width="1" height="0.9" fill="#9a9a9a"/><path d="M3 246.0h3" stroke="#bdbdbd" stroke-width="0.8"/><rect x="4" y="250.7" width="1" height="0.9" fill="#9a9a9a"/><rect x="4" y="260.9" width="1" height="0.9" fill="#9a9a9a"/><path d="M3 266.4h3" stroke="#bdbdbd" stroke-width="0.8"/><rect x="4" y="271.0" width="1" height="0.9" fill="#9a9a9a"/><rect x="4" y="281.2" width="1" height="0.9" fill="#9a9a9a"/><path d="M3 286.6h3" stroke="#bdbdbd" stroke-width="0.8"/><rect x="4" y="291.3" width="1" height="0.9" fill="#9a9a9a"/><rect x="4" y="301.5" width="1" height="0.9" fill="#9a9a9a"/><path d="M3 306.9h3" stroke="#bdbdbd" stroke-width="0.8"/><rect x="4" y="311.6" width="1" height="0.9" fill="#9a9a9a"/><rect x="4" y="321.8" width="1" height="0.9" fill="#9a9a9a"/><path d="M3 327.2h3" stroke="#bdbdbd" stroke-width="0.8"/><rect x="4" y="331.9" width="1" height="0.9" fill="#9a9a9a"/><rect x="4" y="342.1" width="1" height="0.9" fill="#9a9a9a"/><path d="M3 347.5h3" stroke="#bdbdbd" stroke-width="0.8"/><rect x="4" y="352.2" width="1" height="0.9" fill="#9a9a9a"/><rect x="4" y="362.4" width="1" height="0.9" fill="#9a9a9a"/><path d="M3 367.9h3" stroke="#bdbdbd" stroke-width="0.8"/><rect x="4" y="372.5" width="1" height="0.9" fill="#9a9a9a"/><rect x="4" y="382.7" width="1" height="0.9" fill="#9a9a9a"/><path d="M3 388.1h3" stroke="#bdbdbd" stroke-width="0.8"/><rect x="4" y="392.8" width="1" height="0.9" fill="#9a9a9a"/><rect x="4" y="403.0" width="1" height="0.9" fill="#9a9a9a"/><path d="M3 408.5h3" stroke="#bdbdbd" stroke-width="0.8"/><rect x="4" y="413.1" width="1" height="0.9" fill="#9a9a9a"/><rect x="4" y="423.3" width="1" height="0.9" fill="#9a9a9a"/><path d="M3 428.8h3" stroke="#bdbdbd" stroke-width="0.8"/><rect x="4" y="433.4" width="1" height="0.9" fill="#9a9a9a"/><rect x="4" y="443.6" width="1" height="0.9" fill="#9a9a9a"/><path d="M3 449.0h3" stroke="#bdbdbd" stroke-width="0.8"/><rect x="4" y="453.7" width="1" height="0.9" fill="#9a9a9a"/><rect x="4" y="463.9" width="1" height="0.9" fill="#9a9a9a"/><path d="M3 469.4h3" stroke="#bdbdbd" stroke-width="0.8"/><rect x="4" y="474.0" width="1" height="0.9" fill="#9a9a9a"/><rect x="4" y="484.2" width="1" height="0.9" fill="#9a9a9a"/><path d="M3 489.6h3" stroke="#bdbdbd" stroke-width="0.8"/><rect x="4" y="494.3" width="1" height="0.9" fill="#9a9a9a"/><rect x="4" y="504.5" width="1" height="0.9" fill="#9a9a9a"/><path d="M3 510.0h3" stroke="#bdbdbd" stroke-width="0.8"/><rect x="4" y="514.6" width="1" height="0.9" fill="#9a9a9a"/><rect x="4" y="524.8" width="1" height="0.9" fill="#9a9a9a"/><path d="M3 530.2h3" stroke="#bdbdbd" stroke-width="0.8"/><rect x="4" y="534.9" width="1" height="0.9" fill="#9a9a9a"/><rect x="4" y="545.1" width="1" height="0.9" fill="#9a9a9a"/><path d="M3 550.5h3" stroke="#bdbdbd" stroke-width="0.8"/><rect x="4" y="555.2" width="1" height="0.9" fill="#9a9a9a"/><rect x="4" y="565.4" width="1" height="0.9" fill="#9a9a9a"/></svg><div class="t" style="left:5.5px;top:186.6px;width:5.0px;height:8px;font-family:'Liberation Sans', sans-serif;font-size:7.2px;line-height:8px;color:#e8e8e8;text-align:center;transform:rotate(-90deg);letter-spacing:-0.3px">2</div><div class="t" style="left:5.5px;top:206.9px;width:5.0px;height:8px;font-family:'Liberation Sans', sans-serif;font-size:7.2px;line-height:8px;color:#e8e8e8;text-align:center;transform:rotate(-90deg);letter-spacing:-0.3px">1</div><div class="t" style="left:5.5px;top:247.5px;width:5.0px;height:8px;font-family:'Liberation Sans', sans-serif;font-size:7.2px;line-height:8px;color:#e8e8e8;text-align:center;transform:rotate(-90deg);letter-spacing:-0.3px">1</div><div class="t" style="left:5.5px;top:267.8px;width:5.0px;height:8px;font-family:'Liberation Sans', sans-serif;font-size:7.2px;line-height:8px;color:#e8e8e8;text-align:center;transform:rotate(-90deg);letter-spacing:-0.3px">2</div><div class="t" style="left:5.5px;top:288.1px;width:5.0px;height:8px;font-family:'Liberation Sans', sans-serif;font-size:7.2px;line-height:8px;color:#e8e8e8;text-align:center;transform:rotate(-90deg);letter-spacing:-0.3px">3</div><div class="t" style="left:5.5px;top:308.4px;width:5.0px;height:8px;font-family:'Liberation Sans', sans-serif;font-size:7.2px;line-height:8px;color:#e8e8e8;text-align:center;transform:rotate(-90deg);letter-spacing:-0.3px">4</div><div class="t" style="left:5.5px;top:328.7px;width:5.0px;height:8px;font-family:'Liberation Sans', sans-serif;font-size:7.2px;line-height:8px;color:#e8e8e8;text-align:center;transform:rotate(-90deg);letter-spacing:-0.3px">5</div><div class="t" style="left:5.5px;top:349.0px;width:5.0px;height:8px;font-family:'Liberation Sans', sans-serif;font-size:7.2px;line-height:8px;color:#e8e8e8;text-align:center;transform:rotate(-90deg);letter-spacing:-0.3px">6</div><div class="t" style="left:5.5px;top:369.3px;width:5.0px;height:8px;font-family:'Liberation Sans', sans-serif;font-size:7.2px;line-height:8px;color:#e8e8e8;text-align:center;transform:rotate(-90deg);letter-spacing:-0.3px">7</div><div class="t" style="left:5.5px;top:389.6px;width:5.0px;height:8px;font-family:'Liberation Sans', sans-serif;font-size:7.2px;line-height:8px;color:#e8e8e8;text-align:center;transform:rotate(-90deg);letter-spacing:-0.3px">8</div><div class="t" style="left:5.5px;top:409.9px;width:5.0px;height:8px;font-family:'Liberation Sans', sans-serif;font-size:7.2px;line-height:8px;color:#e8e8e8;text-align:center;transform:rotate(-90deg);letter-spacing:-0.3px">9</div><div class="t" style="left:3.5px;top:430.2px;width:9.0px;height:8px;font-family:'Liberation Sans', sans-serif;font-size:7.2px;line-height:8px;color:#e8e8e8;text-align:center;transform:rotate(-90deg);letter-spacing:-0.3px">10</div><div class="t" style="left:3.5px;top:450.5px;width:9.0px;height:8px;font-family:'Liberation Sans', sans-serif;font-size:7.2px;line-height:8px;color:#e8e8e8;text-align:center;transform:rotate(-90deg);letter-spacing:-0.3px">11</div><div class="t" style="left:3.5px;top:470.8px;width:9.0px;height:8px;font-family:'Liberation Sans', sans-serif;font-size:7.2px;line-height:8px;color:#e8e8e8;text-align:center;transform:rotate(-90deg);letter-spacing:-0.3px">12</div><div class="t" style="left:3.5px;top:491.1px;width:9.0px;height:8px;font-family:'Liberation Sans', sans-serif;font-size:7.2px;line-height:8px;color:#e8e8e8;text-align:center;transform:rotate(-90deg);letter-spacing:-0.3px">13</div><div class="t" style="left:3.5px;top:511.4px;width:9.0px;height:8px;font-family:'Liberation Sans', sans-serif;font-size:7.2px;line-height:8px;color:#e8e8e8;text-align:center;transform:rotate(-90deg);letter-spacing:-0.3px">14</div><div class="t" style="left:3.5px;top:531.7px;width:9.0px;height:8px;font-family:'Liberation Sans', sans-serif;font-size:7.2px;line-height:8px;color:#e8e8e8;text-align:center;transform:rotate(-90deg);letter-spacing:-0.3px">15</div><div class="t" style="left:3.5px;top:552.0px;width:9.0px;height:8px;font-family:'Liberation Sans', sans-serif;font-size:7.2px;line-height:8px;color:#e8e8e8;text-align:center;transform:rotate(-90deg);letter-spacing:-0.3px">16</div><div class="t" style="left:3.5px;top:572.3px;width:9.0px;height:8px;font-family:'Liberation Sans', sans-serif;font-size:7.2px;line-height:8px;color:#e8e8e8;text-align:center;transform:rotate(-90deg);letter-spacing:-0.3px">17</div><div class="t" style="left:3.5px;top:592.6px;width:9.0px;height:8px;font-family:'Liberation Sans', sans-serif;font-size:7.2px;line-height:8px;color:#e8e8e8;text-align:center;transform:rotate(-90deg);letter-spacing:-0.3px">18</div><div class="t" style="left:3.5px;top:612.9px;width:9.0px;height:8px;font-family:'Liberation Sans', sans-serif;font-size:7.2px;line-height:8px;color:#e8e8e8;text-align:center;transform:rotate(-90deg);letter-spacing:-0.3px">19</div><div class="t" style="left:3.5px;top:633.2px;width:9.0px;height:8px;font-family:'Liberation Sans', sans-serif;font-size:7.2px;line-height:8px;color:#e8e8e8;text-align:center;transform:rotate(-90deg);letter-spacing:-0.3px">20</div><div class="t" style="left:3.5px;top:653.5px;width:9.0px;height:8px;font-family:'Liberation Sans', sans-serif;font-size:7.2px;line-height:8px;color:#e8e8e8;text-align:center;transform:rotate(-90deg);letter-spacing:-0.3px">21</div><div class="t" style="left:3.5px;top:673.8px;width:9.0px;height:8px;font-family:'Liberation Sans', sans-serif;font-size:7.2px;line-height:8px;color:#e8e8e8;text-align:center;transform:rotate(-90deg);letter-spacing:-0.3px">22</div><div class="t" style="left:3.5px;top:714.4px;width:9.0px;height:8px;font-family:'Liberation Sans', sans-serif;font-size:7.2px;line-height:8px;color:#e8e8e8;text-align:center;transform:rotate(-90deg);letter-spacing:-0.3px">24</div><div class="t" style="left:3.5px;top:734.7px;width:9.0px;height:8px;font-family:'Liberation Sans', sans-serif;font-size:7.2px;line-height:8px;color:#e8e8e8;text-align:center;transform:rotate(-90deg);letter-spacing:-0.3px">25</div><div class="r" style="left:75px;top:179px;width:439px;height:568px;background:#1c1c1c"></div><div class="r" style="left:76px;top:180px;width:437px;height:566px;background:#ffffff"></div><div class="r" style="left:522px;top:179px;width:439px;height:568px;background:#1c1c1c"></div><div class="r" style="left:523px;top:180px;width:437px;height:566px;background:#ffffff"></div><div class="r" style="left:969px;top:179px;width:439px;height:568px;background:#1c1c1c"></div><div class="r" style="left:970px;top:180px;width:437px;height:566px;background:#ffffff"></div><div class="t pg" style="left:140.75px;top:232.80px;font-size:8.6px;line-height:8.6px;color:#000;font-family:'Liberation Serif', serif;">1.</div><div class="t pg" style="left:152.90px;top:232.80px;font-size:8.6px;line-height:8.6px;color:#000;font-family:'Liberation Serif', serif;width:309.30px;text-align:justify;text-align-last:justify;white-space:normal;">Pada <span class="u">lembar</span> <span class="u">ini</span> <span class="u">dimohon</span> Bapak/<span class="u">Ibu</span> <span class="u">memberikan</span> <span class="u">penilaian</span> dan <span class="u">komentar</span> <span class="u">apakah</span></div><div class="t pg" style="left:152.90px;top:247.62px;font-size:8.6px;line-height:8.6px;color:#000;font-family:'Liberation Serif', serif;width:309.30px;text-align:justify;text-align-last:justify;white-space:normal;"><span class="u">komponen-komponen</span> Panduan Video <span class="u">Analsis</span> (2) <span class="u">memenuhi</span> <span class="u">kriteria</span> yang <span class="u">terdapat</span> pada</div><div class="t pg" style="left:152.90px;top:262.44px;font-size:8.6px;line-height:8.6px;color:#000;font-family:'Liberation Serif', serif;width:309.30px;white-space:normal;"><span class="u">kolom</span> (3)</div><div class="t pg" style="left:140.75px;top:277.26px;font-size:8.6px;line-height:8.6px;color:#000;font-family:'Liberation Serif', serif;">2.</div><div class="t pg" style="left:152.90px;top:277.26px;font-size:8.6px;line-height:8.6px;color:#000;font-family:'Liberation Serif', serif;width:309.30px;text-align:justify;text-align-last:justify;white-space:normal;"><span class="u">Penilaian</span> <span class="u">komponen</span> 1 di <span class="u">isi</span> pada <span class="u">kolom</span> (4), <span class="u">skor</span> <span class="u">penilaian</span> <span class="u">untuk</span> <span class="u">kelengkapan</span> <b><span class="u">identitas</span></b></div><div class="t pg" style="left:152.90px;top:292.08px;font-size:8.6px;line-height:8.6px;color:#000;font-family:'Liberation Serif', serif;width:309.30px;white-space:normal;"><b><span class="u">panduan</span> video <span class="u">analisis</span></b>. <span class="u">Kriteria</span> <span class="u">penilaian</span> <span class="u">sebagai</span> <span class="u">berikut</span>:</div><div class="t pg" style="left:152.90px;top:306.90px;font-size:8.6px;line-height:8.6px;color:#000;font-family:'Liberation Serif', serif;width:309.30px;white-space:normal;"><span class="u">Skor</span> 4 <span class="eq">=</span> <span class="u">jika</span> <span class="u">lengkap</span></div><div class="t pg" style="left:152.90px;top:321.72px;font-size:8.6px;line-height:8.6px;color:#000;font-family:'Liberation Serif', serif;width:309.30px;white-space:normal;"><span class="u">Skor</span> 3 <span class="eq">=</span> <span class="u">jika</span> <span class="u">lengkap</span> <span class="u">namun</span> <span class="u">sedikit</span> <span class="u">revisi</span></div><div class="t pg" style="left:152.90px;top:336.54px;font-size:8.6px;line-height:8.6px;color:#000;font-family:'Liberation Serif', serif;width:309.30px;text-align:justify;text-align-last:justify;white-space:normal;"><span class="u">Skor</span> 2 <span class="eq">=</span> <span class="u">jika</span> <span class="u">lengkap</span> <span class="u">tetapi</span> <span class="u">dengan</span> <span class="u">revisi</span> <span class="u">besar</span> dan <span class="u">memerlukan</span> <span class="u">penilaian</span> (<span class="u">validasi</span>)</div><div class="t pg" style="left:152.90px;top:351.36px;font-size:8.6px;line-height:8.6px;color:#000;font-family:'Liberation Serif', serif;width:309.30px;white-space:normal;"><span class="u">kembali</span></div><div class="t pg" style="left:152.90px;top:366.18px;font-size:8.6px;line-height:8.6px;color:#000;font-family:'Liberation Serif', serif;width:309.30px;white-space:normal;"><span class="u">Skor</span> 1 <span class="eq">=</span> <span class="u">jika</span> <span class="u">tidak</span> <span class="u">lengkap</span></div><div class="t pg" style="left:140.75px;top:381.00px;font-size:8.6px;line-height:8.6px;color:#000;font-family:'Liberation Serif', serif;">3.</div><div class="t pg" style="left:152.90px;top:381.00px;font-size:8.6px;line-height:8.6px;color:#000;font-family:'Liberation Serif', serif;width:309.30px;text-align:justify;text-align-last:justify;white-space:normal;"><span class="u">Penilaian</span> <span class="u">komponen</span> 2- 5 di <span class="u">isi</span> pada <span class="u">kolom</span> (4), <span class="u">skor</span> <span class="u">penilaian</span> <span class="u">untuk</span> <span class="u">kesesuaian</span> <b><span class="u">tujuan</span>,</b></div><div class="t pg" style="left:152.90px;top:395.82px;font-size:8.6px;line-height:8.6px;color:#000;font-family:'Liberation Serif', serif;width:309.30px;white-space:normal;"><b><span class="u">alat</span> dan <span class="u">bahan</span>, <span class="u">langkah</span> <span class="u">kerja</span>, dan <span class="u">bahasa</span></b>. <span class="u">Kriteria</span> <span class="u">penilaian</span> <span class="u">sebagai</span> <span class="u">berikut</span>:</div><div class="t pg" style="left:152.90px;top:410.64px;font-size:8.6px;line-height:8.6px;color:#000;font-family:'Liberation Serif', serif;width:309.30px;white-space:normal;"><span class="u">Skor</span> 4 <span class="eq">=</span> <span class="u">jika</span> <span class="u">sangat</span> <span class="u">sesuai</span></div><div class="t pg" style="left:152.90px;top:425.46px;font-size:8.6px;line-height:8.6px;color:#000;font-family:'Liberation Serif', serif;width:309.30px;white-space:normal;"><span class="u">Skor</span> 3 <span class="eq">=</span> <span class="u">jika</span> <span class="u">sesuai</span> <span class="u">dengan</span> <span class="u">sedikit</span> <span class="u">revisi</span></div><div class="t pg" style="left:152.90px;top:440.28px;font-size:8.6px;line-height:8.6px;color:#000;font-family:'Liberation Serif', serif;width:309.30px;text-align:justify;text-align-last:justify;white-space:normal;word-spacing:-0.6px;"><span class="u">Skor</span> 2 <span class="eq">=</span> <span class="u">jika</span> <span class="u">sesuai</span> <span class="u">tetapi</span> <span class="u">dengan</span> <span class="u">revisi</span> <span class="u">besar</span> dan <span class="u">memerlukan</span> <span class="u">penilaian</span> (<span class="u">validasi</span>) <span class="u">kembali</span></div><div class="t pg" style="left:152.90px;top:455.10px;font-size:8.6px;line-height:8.6px;color:#000;font-family:'Liberation Serif', serif;width:309.30px;white-space:normal;"><span class="u">Skor</span> 1 <span class="eq">=</span> <span class="u">jika</span> <span class="u">tidak</span> <span class="u">sesuai</span></div><div class="t pg" style="left:140.75px;top:471.09px;font-size:7.2px;line-height:7.2px;color:#000;font-family:'Liberation Serif', serif;">4.</div><div class="t pg" style="left:152.90px;top:469.92px;font-size:8.6px;line-height:8.6px;color:#000;font-family:'Liberation Serif', serif;width:309.30px;white-space:normal;"><span class="u">Selanjutnya</span> <span class="u">jika</span> <span class="u">ada</span> <span class="u">komentar</span> <span class="u">dimohon</span> Bapak/<span class="u">Ibu</span> <span class="u">mengisi</span> pada <span class="u">kolom</span> (5)</div><div class="t pg" style="left:1034.75px;top:232.80px;font-size:8.6px;line-height:8.6px;color:#000;font-family:'Liberation Serif', serif;">1.</div><div class="t pg" style="left:1046.90px;top:232.80px;font-size:8.6px;line-height:8.6px;color:#000;font-family:'Liberation Serif', serif;width:309.30px;text-align:justify;text-align-last:justify;white-space:normal;">Pada <span class="u">lembar</span> <span class="u">ini</span> <span class="u">dimohon</span> Bapak/<span class="u">Ibu</span> <span class="u">memberikan</span> <span class="u">penilaian</span> dan <span class="u">komentar</span> <span class="u">apakah</span></div><div class="t pg" style="left:1046.90px;top:247.62px;font-size:8.6px;line-height:8.6px;color:#000;font-family:'Liberation Serif', serif;width:309.30px;text-align:justify;text-align-last:justify;white-space:normal;"><span class="u">komponen-komponen</span> Panduan Video <span class="u">Analsis</span> (2) <span class="u">memenuhi</span> <span class="u">kriteria</span> yang <span class="u">terdapat</span> pada</div><div class="t pg" style="left:1046.90px;top:262.44px;font-size:8.6px;line-height:8.6px;color:#000;font-family:'Liberation Serif', serif;width:309.30px;white-space:normal;"><span class="u">kolom</span> (3)</div><div class="t pg" style="left:1034.75px;top:277.26px;font-size:8.6px;line-height:8.6px;color:#000;font-family:'Liberation Serif', serif;">2.</div><div class="t pg" style="left:1046.90px;top:277.26px;font-size:8.6px;line-height:8.6px;color:#000;font-family:'Liberation Serif', serif;width:309.30px;text-align:justify;text-align-last:justify;white-space:normal;"><span class="u">Penilaian</span> <span class="u">komponen</span> 1 di <span class="u">isi</span> pada <span class="u">kolom</span> (4), <span class="u">skor</span> <span class="u">penilaian</span> <span class="u">untuk</span> <span class="u">kelengkapan</span> <b><span class="u">identitas</span></b></div><div class="t pg" style="left:1046.90px;top:292.08px;font-size:8.6px;line-height:8.6px;color:#000;font-family:'Liberation Serif', serif;width:309.30px;white-space:normal;"><b><span class="u">panduan</span> video <span class="u">analisis</span></b>. <span class="u">Kriteria</span> <span class="u">penilaian</span> <span class="u">sebagai</span> <span class="u">berikut</span>:</div><div class="t pg" style="left:1046.90px;top:306.90px;font-size:8.6px;line-height:8.6px;color:#000;font-family:'Liberation Serif', serif;width:309.30px;white-space:normal;"><span class="u">Skor</span> 4 <span class="eq">=</span> <span class="u">jika</span> <span class="u">lengkap</span></div><div class="t pg" style="left:1046.90px;top:321.72px;font-size:8.6px;line-height:8.6px;color:#000;font-family:'Liberation Serif', serif;width:309.30px;white-space:normal;"><span class="u">Skor</span> 3 <span class="eq">=</span> <span class="u">jika</span> <span class="u">lengkap</span> <span class="u">namun</span> <span class="u">sedikit</span> <span class="u">revisi</span></div><div class="t pg" style="left:1046.90px;top:336.54px;font-size:8.6px;line-height:8.6px;color:#000;font-family:'Liberation Serif', serif;width:309.30px;text-align:justify;text-align-last:justify;white-space:normal;"><span class="u">Skor</span> 2 <span class="eq">=</span> <span class="u">jika</span> <span class="u">lengkap</span> <span class="u">tetapi</span> <span class="u">dengan</span> <span class="u">revisi</span> <span class="u">besar</span> dan <span class="u">memerlukan</span> <span class="u">penilaian</span> (<span class="u">validasi</span>)</div><div class="t pg" style="left:1046.90px;top:351.36px;font-size:8.6px;line-height:8.6px;color:#000;font-family:'Liberation Serif', serif;width:309.30px;white-space:normal;"><span class="u">kembali</span></div><div class="t pg" style="left:1046.90px;top:366.18px;font-size:8.6px;line-height:8.6px;color:#000;font-family:'Liberation Serif', serif;width:309.30px;white-space:normal;"><span class="u">Skor</span> 1 <span class="eq">=</span> <span class="u">jika</span> <span class="u">tidak</span> <span class="u">lengkap</span></div><div class="t pg" style="left:1034.75px;top:381.00px;font-size:8.6px;line-height:8.6px;color:#000;font-family:'Liberation Serif', serif;">3.</div><div class="t pg" style="left:1046.90px;top:381.00px;font-size:8.6px;line-height:8.6px;color:#000;font-family:'Liberation Serif', serif;width:309.30px;text-align:justify;text-align-last:justify;white-space:normal;"><span class="u">Penilaian</span> <span class="u">komponen</span> 2- 5 di <span class="u">isi</span> pada <span class="u">kolom</span> (4), <span class="u">skor</span> <span class="u">penilaian</span> <span class="u">untuk</span> <span class="u">kesesuaian</span> <b><span class="u">tujuan</span>,</b></div><div class="t pg" style="left:1046.90px;top:395.82px;font-size:8.6px;line-height:8.6px;color:#000;font-family:'Liberation Serif', serif;width:309.30px;white-space:normal;"><b><span class="u">alat</span> dan <span class="u">bahan</span>, <span class="u">langkah</span> <span class="u">kerja</span>, dan <span class="u">bahasa</span></b>. <span class="u">Kriteria</span> <span class="u">penilaian</span> <span class="u">sebagai</span> <span class="u">berikut</span>:</div><div class="t pg" style="left:1046.90px;top:410.64px;font-size:8.6px;line-height:8.6px;color:#000;font-family:'Liberation Serif', serif;width:309.30px;white-space:normal;"><span class="u">Skor</span> 4 <span class="eq">=</span> <span class="u">jika</span> <span class="u">sangat</span> <span class="u">sesuai</span></div><div class="t pg" style="left:1046.90px;top:425.46px;font-size:8.6px;line-height:8.6px;color:#000;font-family:'Liberation Serif', serif;width:309.30px;white-space:normal;"><span class="u">Skor</span> 3 <span class="eq">=</span> <span class="u">jika</span> <span class="u">sesuai</span> <span class="u">dengan</span> <span class="u">sedikit</span> <span class="u">revisi</span></div><div class="t pg" style="left:1046.90px;top:440.28px;font-size:8.6px;line-height:8.6px;color:#000;font-family:'Liberation Serif', serif;width:309.30px;text-align:justify;text-align-last:justify;white-space:normal;word-spacing:-0.6px;"><span class="u">Skor</span> 2 <span class="eq">=</span> <span class="u">jika</span> <span class="u">sesuai</span> <span class="u">tetapi</span> <span class="u">dengan</span> <span class="u">revisi</span> <span class="u">besar</span> dan <span class="u">memerlukan</span> <span class="u">penilaian</span> (<span class="u">validasi</span>) <span class="u">kembali</span></div><div class="t pg" style="left:1046.90px;top:455.10px;font-size:8.6px;line-height:8.6px;color:#000;font-family:'Liberation Serif', serif;width:309.30px;white-space:normal;"><span class="u">Skor</span> 1 <span class="eq">=</span> <span class="u">jika</span> <span class="u">tidak</span> <span class="u">sesuai</span></div><div class="t pg" style="left:1034.75px;top:471.09px;font-size:7.2px;line-height:7.2px;color:#000;font-family:'Liberation Serif', serif;">4.</div><div class="t pg" style="left:1046.90px;top:469.92px;font-size:8.6px;line-height:8.6px;color:#000;font-family:'Liberation Serif', serif;width:309.30px;white-space:normal;"><span class="u">Selanjutnya</span> <span class="u">jika</span> <span class="u">ada</span> <span class="u">komentar</span> <span class="u">dimohon</span> Bapak/<span class="u">Ibu</span> <span class="u">mengisi</span> pada <span class="u">kolom</span> (5)</div><div class="r" style="left:1047px;top:232px;width:1px;height:9px;background:#000"></div><div class="r" style="left:523px;top:180px;width:437px;height:566px;overflow:hidden"><div class="r" style="left:50px;top:51px;width:500px;height:1px;background:#111"></div><div class="r" style="left:50px;top:71px;width:500px;height:1px;background:#111"></div><div class="r" style="left:50px;top:81px;width:500px;height:1px;background:#111"></div><div class="r" style="left:50px;top:121px;width:500px;height:1px;background:#111"></div><div class="r" style="left:50px;top:161px;width:500px;height:1px;background:#111"></div><div class="r" style="left:50px;top:181px;width:500px;height:1px;background:#111"></div><div class="r" style="left:50px;top:211px;width:500px;height:1px;background:#111"></div><div class="r" style="left:50px;top:241px;width:500px;height:1px;background:#111"></div><div class="r" style="left:162px;top:231px;width:500px;height:1px;background:#111"></div><div class="r" style="left:50px;top:51px;width:1px;height:191px;background:#111"></div><div class="r" style="left:70px;top:51px;width:1px;height:191px;background:#111"></div><div class="r" style="left:162px;top:51px;width:1px;height:191px;background:#111"></div><div class="r" style="left:324px;top:51px;width:1px;height:191px;background:#111"></div><div class="r" style="left:367px;top:51px;width:1px;height:191px;background:#111"></div><div class="r" style="left:493px;top:51px;width:1px;height:191px;background:#111"></div><div class="t pg" style="left:50.50px;top:51.40px;font-size:8.6px;line-height:8.6px;color:#000;font-family:'Liberation Serif', serif;font-weight:700;width:20.00px;text-align:center;">No</div><div class="t pg" style="left:70.50px;top:51.40px;font-size:8.6px;line-height:8.6px;color:#000;font-family:'Liberation Serif', serif;font-weight:700;width:92.00px;text-align:center;"><span class="u">Komponen</span> Panduan</div><div class="t pg" style="left:70.50px;top:61.40px;font-size:8.6px;line-height:8.6px;color:#000;font-family:'Liberation Serif', serif;font-weight:700;width:92.00px;text-align:center;">Video <span class="u">Analisis</span></div><div class="t pg" style="left:162.50px;top:51.40px;font-size:8.6px;line-height:8.6px;color:#000;font-family:'Liberation Serif', serif;font-weight:700;width:162.00px;text-align:center;"><span class="u">Kriteria</span></div><div class="t pg" style="left:324.70px;top:51.40px;font-size:8.6px;line-height:8.6px;color:#000;font-family:'Liberation Serif', serif;font-weight:700;width:43.00px;text-align:center;"><span class="u">Skor</span></div><div class="t pg" style="left:324.70px;top:61.40px;font-size:8.6px;line-height:8.6px;color:#000;font-family:'Liberation Serif', serif;font-weight:700;width:43.00px;text-align:center;"><span class="u">Penilaian</span></div><div class="t pg" style="left:367.30px;top:51.40px;font-size:8.6px;line-height:8.6px;color:#000;font-family:'Liberation Serif', serif;font-weight:700;width:126.00px;text-align:center;"><span class="u">Komentar</span></div><div class="t pg" style="left:50.50px;top:71.90px;font-size:8.6px;line-height:8.6px;color:#000;font-family:'Liberation Serif', serif;font-weight:700;width:20.00px;text-align:center;">(1)</div><div class="t pg" style="left:70.50px;top:71.90px;font-size:8.6px;line-height:8.6px;color:#000;font-family:'Liberation Serif', serif;font-weight:700;width:92.00px;text-align:center;">(2)</div><div class="t pg" style="left:162.50px;top:71.90px;font-size:8.6px;line-height:8.6px;color:#000;font-family:'Liberation Serif', serif;font-weight:700;width:162.00px;text-align:center;">(3)</div><div class="t pg" style="left:324.70px;top:71.90px;font-size:8.6px;line-height:8.6px;color:#000;font-family:'Liberation Serif', serif;font-weight:700;width:43.00px;text-align:center;">(4)</div><div class="t pg" style="left:367.30px;top:71.90px;font-size:8.6px;line-height:8.6px;color:#000;font-family:'Liberation Serif', serif;font-weight:700;width:126.00px;text-align:center;">(5)</div><div class="t pg" style="left:55.50px;top:81.60px;font-size:8.6px;line-height:8.6px;color:#000;font-family:'Liberation Serif', serif;">1</div><div class="t pg" style="left:74.00px;top:81.60px;font-size:8.6px;line-height:8.6px;color:#000;font-family:'Liberation Serif', serif;"><span class="u">Identitas</span> <span class="u">panduan</span></div><div class="t pg" style="left:166.70px;top:81.60px;font-size:8.6px;line-height:8.6px;color:#000;font-family:'Liberation Serif', serif;">Panduan video <span class="u">analisis</span> <span class="u">mencantumkan</span></div><div class="t pg" style="left:166.70px;top:91.50px;font-size:8.6px;line-height:8.6px;color:#000;font-family:'Liberation Serif', serif;"><span class="u">Identitas</span> yang <span class="u">jelas</span> <span class="u">terdiri</span> <span class="u">dari</span></div><div class="t pg" style="left:166.70px;top:101.40px;font-size:8.6px;line-height:8.6px;color:#000;font-family:'Liberation Serif', serif;"><span class="u">Judul</span>, <span class="u">Tujuan</span>, <span class="u">alat</span> dan <span class="u">bahan</span>, <span class="u">langkah</span> <span class="u">kerja</span></div><div class="t pg" style="left:166.70px;top:111.30px;font-size:8.6px;line-height:8.6px;color:#000;font-family:'Liberation Serif', serif;">(<span class="u">langkah</span> <span class="u">pengambilan</span> video dan <span class="u">analisis</span>)</div><div class="t pg" style="left:55.50px;top:121.50px;font-size:8.6px;line-height:8.6px;color:#000;font-family:'Liberation Serif', serif;">2</div><div class="t pg" style="left:74.00px;top:121.50px;font-size:8.6px;line-height:8.6px;color:#000;font-family:'Liberation Serif', serif;"><span class="u">Tujuan</span></div><div class="t pg" style="left:166.70px;top:121.50px;font-size:8.6px;line-height:8.6px;color:#000;font-family:'Liberation Serif', serif;">Panduan <span class="u">berisi</span> <span class="u">tujuan</span> <span class="u">melatih</span> <span class="u">mahasiswa</span></div><div class="t pg" style="left:166.70px;top:131.40px;font-size:8.6px;line-height:8.6px;color:#000;font-family:'Liberation Serif', serif;"><span class="u">menggunakan</span> program <i>logger pro</i> <span class="u">untuk</span></div><div class="t pg" style="left:166.70px;top:141.30px;font-size:8.6px;line-height:8.6px;color:#000;font-family:'Liberation Serif', serif;"><span class="u">menganalisis</span> <span class="u">fenomena</span> <span class="u">fisika</span> <span class="u">dalam</span></div><div class="t pg" style="left:166.70px;top:151.20px;font-size:8.6px;line-height:8.6px;color:#000;font-family:'Liberation Serif', serif;"><span class="u">kehidupan</span> <span class="u">sehari-hari</span></div><div class="t pg" style="left:55.50px;top:161.50px;font-size:8.6px;line-height:8.6px;color:#000;font-family:'Liberation Serif', serif;">3</div><div class="t pg" style="left:74.00px;top:161.50px;font-size:8.6px;line-height:8.6px;color:#000;font-family:'Liberation Serif', serif;"><span class="u">Alat</span> dan <span class="u">Bahan</span></div><div class="t pg" style="left:166.70px;top:161.50px;font-size:8.6px;line-height:8.6px;color:#000;font-family:'Liberation Serif', serif;">Panduan <span class="u">menjelaskan</span> <span class="u">alat</span> dan <span class="u">bahan</span> yang</div><div class="t pg" style="left:166.70px;top:171.40px;font-size:8.6px;line-height:8.6px;color:#000;font-family:'Liberation Serif', serif;"><span class="u">digunakan</span> <span class="u">untuk</span> <span class="u">menganalisis</span> video</div><div class="t pg" style="left:55.50px;top:181.70px;font-size:8.6px;line-height:8.6px;color:#000;font-family:'Liberation Serif', serif;">4</div><div class="t pg" style="left:74.00px;top:181.70px;font-size:8.6px;line-height:8.6px;color:#000;font-family:'Liberation Serif', serif;"><span class="u">Langkah</span> <span class="u">Kerja</span></div><div class="t pg" style="left:166.70px;top:181.70px;font-size:8.6px;line-height:8.6px;color:#000;font-family:'Liberation Serif', serif;"><span class="u">Langkah</span> <span class="u">kerja</span> yang <span class="u">tercantum</span> pada <span class="u">panduan</span></div><div class="t pg" style="left:166.70px;top:191.60px;font-size:8.6px;line-height:8.6px;color:#000;font-family:'Liberation Serif', serif;"><span class="u">disajikan</span> <span class="u">dengan</span> <span class="u">jelas</span> dan <span class="u">sistematis</span> <span class="u">terdiri</span></div><div class="t pg" style="left:166.70px;top:201.50px;font-size:8.6px;line-height:8.6px;color:#000;font-family:'Liberation Serif', serif;"><span class="u">dari</span> <span class="u">langkah</span> <span class="u">pengambilan</span> video dan <span class="u">analisis</span></div><div class="t pg" style="left:55.50px;top:211.60px;font-size:8.6px;line-height:8.6px;color:#000;font-family:'Liberation Serif', serif;">5</div><div class="t pg" style="left:74.00px;top:211.60px;font-size:8.6px;line-height:8.6px;color:#000;font-family:'Liberation Serif', serif;">Bahasa</div><div class="t pg" style="left:166.70px;top:211.60px;font-size:8.6px;line-height:8.6px;color:#000;font-family:'Liberation Serif', serif;"><span class="u">Kalimat</span> yang <span class="u">digunakan</span> <span class="u">jelas</span> dan <span class="u">mudah</span></div><div class="t pg" style="left:166.70px;top:221.50px;font-size:8.6px;line-height:8.6px;color:#000;font-family:'Liberation Serif', serif;"><span class="u">dipahami</span></div><div class="t pg" style="left:166.70px;top:231.30px;font-size:8.6px;line-height:8.6px;color:#000;font-family:'Liberation Serif', serif;"><span class="u">Menggunakan</span> Bahasa yang <span class="u">komunikatif</span></div><div class="t pg" style="left:51.50px;top:263.26px;font-size:7.93px;line-height:7.93px;color:#000;font-family:'Liberation Serif', serif;font-style:italic;">Bapak / <span class="u">ibu</span> <span class="u">dimohon</span> <span class="u">memberikan</span> <span class="u">tanda</span> <span class="u">centang</span> <span class="u">atau</span> <span class="u">melingkari</span> <span class="u">pilihan</span> a, b, c <span class="u">untuk</span> <span class="u">memberikan</span></div><div class="t pg" style="left:51.50px;top:272.46px;font-size:7.93px;line-height:7.93px;color:#000;font-family:'Liberation Serif', serif;font-style:italic;"><span class="u">kesimpulan</span> <span class="u">terhadap</span> <span class="u">keseluruhan</span> <span class="u">penilaian</span> yang <span class="u">diberikan</span></div><div class="t pg" style="left:51.50px;top:281.76px;font-size:8.4px;line-height:8.4px;color:#000;font-family:'Liberation Serif', serif;font-weight:700;">Kesimpulan:</div><div class="t pg" style="left:61.30px;top:291.90px;font-size:8.6px;line-height:8.6px;color:#000;font-family:'Liberation Serif', serif;">a.</div><div class="t pg" style="left:77.20px;top:291.90px;font-size:8.6px;line-height:8.6px;color:#000;font-family:'Liberation Serif', serif;"><span class="u">Dapat</span> <span class="u">digunakan</span> <span class="u">tanpa</span> <span class="u">revisi</span></div><div class="t pg" style="left:61.30px;top:301.35px;font-size:8.6px;line-height:8.6px;color:#000;font-family:'Liberation Serif', serif;">b.</div><div class="t pg" style="left:77.20px;top:301.35px;font-size:8.6px;line-height:8.6px;color:#000;font-family:'Liberation Serif', serif;"><span class="u">Dapat</span> <span class="u">digunakan</span> <span class="u">dengan</span> <span class="u">revisi</span></div><div class="t pg" style="left:61.30px;top:310.80px;font-size:8.6px;line-height:8.6px;color:#000;font-family:'Liberation Serif', serif;">c.</div><div class="t pg" style="left:77.20px;top:310.80px;font-size:8.6px;line-height:8.6px;color:#000;font-family:'Liberation Serif', serif;"><span class="u">Tidak</span> <span class="u">dapat</span> <span class="u">digunakan</span></div></div><div class="t" style="left:346.3px;top:328.1px;font-family:'Liberation Serif', serif;font-size:120px;line-height:120px;letter-spacing:-3.05px;transform:scaleX(1.12);transform-origin:0 0;color:rgba(66,66,66,0.17);white-space:pre">sanguilmu.com</div><div class="r" style="left:0px;top:783px;width:1478px;height:14px;background:#333231"></div><svg class="r" style="left:119px;top:785px;" width="13" height="11" viewBox="0 0 13 11"><path d="M1.5 1v9h3.5 M5.5 1v10 M1.5 1h3" fill="none" stroke="#d8d8d8" stroke-width="0.9"/><path d="M7.5 1h2 M7.5 10h2 M8 4l4 4 M12 4l-4 4" fill="none" stroke="#d8d8d8" stroke-width="0.9"/></svg><svg class="r" style="left:248px;top:785px;" width="11" height="11" viewBox="0 0 11 11"><rect x="0.5" y="0.5" width="4" height="4" fill="#d8d8d8"/><path d="M0.5 6.5h10 M6.5 2.5h4 M2 8.5h1.5 M5 8.5h1.5 M8 8.5h1.5 M0.5 10.5h10" stroke="#d8d8d8" stroke-width="0.9"/></svg><svg class="r" style="left:271px;top:784px;" width="14" height="13" viewBox="0 0 14 13"><circle cx="6" cy="6.5" r="4.8" fill="none" stroke="#d8d8d8" stroke-width="1" stroke-dasharray="2 1.2"/><path d="M6 0.5v4 M4 2.5h4" stroke="#d8d8d8" stroke-width="1"/><path d="M8.5 8l4.5 4.5 M13 8l-4.5 4.5" stroke="#d8d8d8" stroke-width="1.2"/></svg><svg class="r" style="left:1266px;top:785px;" width="12" height="12" viewBox="0 0 12 12"><path d="M0.5 1.5h4.5l1 1 1-1h4.5v9h-4.5l-1 1-1-1H0.5z M6 2.5v8" fill="none" stroke="#d8d8d8" stroke-width="0.9"/><path d="M2 4h2.5 M2 6h2.5 M2 8h2.5 M7.5 4h2.5 M7.5 6h2.5 M7.5 8h2.5" stroke="#d8d8d8" stroke-width="0.8"/></svg><div class="r" style="left:1287px;top:783px;width:29px;height:14px;background:#474747"></div><svg class="r" style="left:1295px;top:785px;" width="12" height="12" viewBox="0 0 12 12"><path d="M1.5 0.5h9v11h-9z" fill="none" stroke="#e0e0e0" stroke-width="1"/><path d="M3 3.5h6 M3 6h6 M3 8.5h6" stroke="#e0e0e0" stroke-width="1"/></svg><svg class="r" style="left:1325px;top:785px;" width="13" height="12" viewBox="0 0 13 12"><path d="M8.5 6V0.5h-8v10h5" fill="none" stroke="#d8d8d8" stroke-width="0.9"/><path d="M2.5 3h4 M2.5 5h4 M2.5 7h2.5" stroke="#d8d8d8" stroke-width="0.8"/><circle cx="9.5" cy="9" r="2.6" fill="#333231" stroke="#d8d8d8" stroke-width="0.9"/></svg><div class="r" style="left:1350px;top:792px;width:5px;height:1.3px;background:#e0e0e0"></div><div class="r" style="left:1357px;top:792px;width:77px;height:1px;background:#b0b0b0"></div><div class="r" style="left:1395px;top:790.5px;width:1px;height:3px;background:#999"></div><div class="r" style="left:1382px;top:787px;width:4px;height:9px;background:#f0f0f0"></div><svg class="r" style="left:1436px;top:787px;" width="8" height="8" viewBox="0 0 8 8"><path d="M0.5 4h7 M4 0.5v7" stroke="#e0e0e0" stroke-width="1.3"/></svg><div class="t" style="left:17.40px;top:9.41px;font-size:9.09px;line-height:9.09px;color:#f2f2f2;font-family:'Liberation Sans', sans-serif;">AutoSave</div><div class="t" style="left:696.10px;top:8.98px;font-size:9.36px;line-height:9.36px;color:#f2f2f2;font-family:'Liberation Sans', sans-serif;">Document1  -  Word</div><div class="t" style="left:1242.90px;top:9.89px;font-size:8.87px;line-height:8.87px;color:#f2f2f2;font-family:'Liberation Sans', sans-serif;">Thoha Firdaus</div><div class="t" style="left:12.90px;top:34.24px;font-size:9.4px;line-height:9.4px;color:#eeeeee;font-family:'Liberation Sans', sans-serif;">File</div><div class="t" style="left:53.10px;top:34.24px;font-size:9.4px;line-height:9.4px;color:#eeeeee;font-family:'Liberation Sans', sans-serif;">Home</div><div class="t" style="left:101.90px;top:34.24px;font-size:9.4px;line-height:9.4px;color:#eeeeee;font-family:'Liberation Sans', sans-serif;">Insert</div><div class="t" style="left:149.10px;top:34.24px;font-size:9.4px;line-height:9.4px;color:#eeeeee;font-family:'Liberation Sans', sans-serif;">Design</div><div class="t" style="left:201.40px;top:34.24px;font-size:9.4px;line-height:9.4px;color:#eeeeee;font-family:'Liberation Sans', sans-serif;">Layout</div><div class="t" style="left:253.80px;top:34.24px;font-size:9.4px;line-height:9.4px;color:#eeeeee;font-family:'Liberation Sans', sans-serif;">References</div><div class="t" style="left:324.30px;top:34.24px;font-size:9.4px;line-height:9.4px;color:#eeeeee;font-family:'Liberation Sans', sans-serif;">Mailings</div><div class="t" style="left:384.50px;top:34.24px;font-size:9.4px;line-height:9.4px;color:#eeeeee;font-family:'Liberation Sans', sans-serif;">Review</div><div class="t" style="left:436.50px;top:34.24px;font-size:9.4px;line-height:9.4px;color:#eeeeee;font-family:'Liberation Sans', sans-serif;">View</div><div class="t" style="left:480.80px;top:34.24px;font-size:9.4px;line-height:9.4px;color:#eeeeee;font-family:'Liberation Sans', sans-serif;">Qur&#x27;an Kemenag</div><div class="t" style="left:578.50px;top:34.24px;font-size:9.4px;line-height:9.4px;color:#eeeeee;font-family:'Liberation Sans', sans-serif;">Help</div><div class="t" style="left:642.10px;top:34.24px;font-size:9.4px;line-height:9.4px;color:#eeeeee;font-family:'Liberation Sans', sans-serif;">Search</div><div class="t" style="left:1351.10px;top:33.63px;font-size:10.12px;line-height:10.12px;color:#f0f0f0;font-family:'Liberation Sans', sans-serif;">Share</div><div class="t" style="left:1409.90px;top:33.13px;font-size:10.71px;line-height:10.71px;color:#f0f0f0;font-family:'Liberation Sans', sans-serif;">Comments</div><div class="t" style="left:7.30px;top:82.01px;font-size:9.56px;line-height:9.56px;color:#eeeeee;font-family:'Liberation Sans', sans-serif;">Margins</div><div class="t" style="left:44.40px;top:82.03px;font-size:9.53px;line-height:9.53px;color:#eeeeee;font-family:'Liberation Sans', sans-serif;">Orientation</div><div class="t" style="left:101.10px;top:82.84px;font-size:8.58px;line-height:8.58px;color:#eeeeee;font-family:'Liberation Sans', sans-serif;">Size</div><div class="t" style="left:126.60px;top:81.99px;font-size:9.58px;line-height:9.58px;color:#eeeeee;font-family:'Liberation Sans', sans-serif;">Columns</div><div class="t" style="left:183.10px;top:56.86px;font-size:8.55px;line-height:8.55px;color:#eeeeee;font-family:'Liberation Sans', sans-serif;">Breaks</div><div class="t" style="left:183.10px;top:74.27px;font-size:9.25px;line-height:9.25px;color:#eeeeee;font-family:'Liberation Sans', sans-serif;">Line Numbers</div><div class="t" style="left:183.10px;top:91.23px;font-size:9.53px;line-height:9.53px;color:#eeeeee;font-family:'Liberation Sans', sans-serif;">Hyphenation</div><div class="t" style="left:100.10px;top:113.45px;font-size:8.57px;line-height:8.57px;color:#e0e0e0;font-family:'Liberation Sans', sans-serif;">Page Setup</div><div class="t" style="left:263.90px;top:57.10px;font-size:9.57px;line-height:9.57px;color:#eeeeee;font-family:'Liberation Sans', sans-serif;">Indent</div><div class="t" style="left:280.80px;top:75.30px;font-size:9.1px;line-height:9.1px;color:#eeeeee;font-family:'Liberation Sans', sans-serif;">Left:</div><div class="t" style="left:280.80px;top:93.79px;font-size:9.23px;line-height:9.23px;color:#eeeeee;font-family:'Liberation Sans', sans-serif;">Right:</div><div class="t" style="left:362.60px;top:57.05px;font-size:9.27px;line-height:9.27px;color:#eeeeee;font-family:'Liberation Sans', sans-serif;">Spacing</div><div class="t" style="left:379.90px;top:75.99px;font-size:8.99px;line-height:8.99px;color:#eeeeee;font-family:'Liberation Sans', sans-serif;">Before:</div><div class="t" style="left:379.90px;top:94.09px;font-size:9.46px;line-height:9.46px;color:#eeeeee;font-family:'Liberation Sans', sans-serif;">After:</div><div class="t" style="left:338.20px;top:113.37px;font-size:8.89px;line-height:8.89px;color:#e0e0e0;font-family:'Liberation Sans', sans-serif;">Paragraph</div><div class="t" style="left:481.00px;top:82.13px;font-size:9.42px;line-height:9.42px;color:#6e6e6e;font-family:'Liberation Sans', sans-serif;">Position</div><div class="t" style="left:521.80px;top:82.35px;font-size:9.15px;line-height:9.15px;color:#6e6e6e;font-family:'Liberation Sans', sans-serif;">Wrap</div><div class="t" style="left:521.80px;top:95.30px;font-size:8.5px;line-height:8.5px;color:#6e6e6e;font-family:'Liberation Sans', sans-serif;">Text</div><div class="t" style="left:559.20px;top:82.02px;font-size:9.55px;line-height:9.55px;color:#6e6e6e;font-family:'Liberation Sans', sans-serif;">Bring</div><div class="t" style="left:550.00px;top:94.70px;font-size:9.22px;line-height:9.22px;color:#6e6e6e;font-family:'Liberation Sans', sans-serif;">Forward</div><div class="t" style="left:606.10px;top:82.56px;font-size:8.91px;line-height:8.91px;color:#6e6e6e;font-family:'Liberation Sans', sans-serif;">Send</div><div class="t" style="left:593.10px;top:94.83px;font-size:9.06px;line-height:9.06px;color:#6e6e6e;font-family:'Liberation Sans', sans-serif;">Backward</div><div class="t" style="left:642.50px;top:82.52px;font-size:9.07px;line-height:9.07px;color:#eaeaea;font-family:'Liberation Sans', sans-serif;">Selection</div><div class="t" style="left:651.20px;top:95.24px;font-size:8.69px;line-height:8.69px;color:#eaeaea;font-family:'Liberation Sans', sans-serif;">Pane</div><div class="t" style="left:698.50px;top:55.70px;font-size:9.8px;line-height:9.8px;color:#eaeaea;font-family:'Liberation Sans', sans-serif;">Align</div><div class="t" style="left:699.10px;top:74.20px;font-size:9.21px;line-height:9.21px;color:#6e6e6e;font-family:'Liberation Sans', sans-serif;">Group</div><div class="t" style="left:699.10px;top:92.16px;font-size:9.03px;line-height:9.03px;color:#6e6e6e;font-family:'Liberation Sans', sans-serif;">Rotate</div><div class="t" style="left:591.40px;top:112.92px;font-size:9.19px;line-height:9.19px;color:#e0e0e0;font-family:'Liberation Sans', sans-serif;">Arrange</div><div class="t" style="left:6.30px;top:787.19px;font-size:8.64px;line-height:8.64px;color:#e0e0e0;font-family:'Liberation Sans', sans-serif;">Page 3 of 3</div><div class="t" style="left:64.20px;top:786.94px;font-size:8.93px;line-height:8.93px;color:#e0e0e0;font-family:'Liberation Sans', sans-serif;">436 words</div><div class="t" style="left:144.40px;top:787.06px;font-size:8.79px;line-height:8.79px;color:#e0e0e0;font-family:'Liberation Sans', sans-serif;">English (United States)</div><div class="t" style="left:286.40px;top:787.08px;font-size:8.77px;line-height:8.77px;color:#e0e0e0;font-family:'Liberation Sans', sans-serif;">Accessibility: Investigate</div><div class="t" style="left:1450.90px;top:787.30px;font-size:8.5px;line-height:8.5px;color:#e0e0e0;font-family:'Liberation Sans', sans-serif;">70%</div>
</body></html>
